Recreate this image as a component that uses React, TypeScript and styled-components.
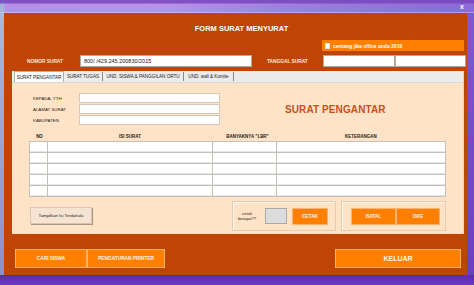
import React from "react";
import styled, { createGlobalStyle } from "styled-components";

const GlobalStyle = createGlobalStyle`
  html, body { margin: 0; padding: 0; width: 474px; height: 285px; overflow: hidden; }
  body { font-family: "Liberation Sans", Arial, sans-serif; background: #6a3cc0; }
  * { box-sizing: border-box; }
`;

const Screen = styled.div`
  width: 474px;
  height: 285px;
  display: flex;
  flex-direction: column;
  background: linear-gradient(90deg, #8f9fd6 0%, #7a54c6 3%, #6b3fc0 100%);
`;

const TitleBar = styled.div`
  height: 13px;
  display: flex;
  justify-content: flex-end;
  align-items: center;
  padding-right: 10px;
  background:
    linear-gradient(180deg, rgba(120, 70, 190, 0.85) 0px, rgba(120, 70, 190, 0.85) 3px, rgba(255, 255, 255, 0) 4px, rgba(255, 255, 255, 0) 12px, rgba(230, 215, 250, 0.9) 13px),
    linear-gradient(90deg, #a3b2dc 0px, #a3b2dc 4px, #b68ee6 5px, #b792e8 35%, #9f80dc 60%, #8a6ad4 100%);
`;

const CloseX = styled.span`
  color: #ffffff;
  font-size: 7px;
  font-weight: bold;
  line-height: 7px;
`;

const Middle = styled.div`
  display: flex;
  height: 262px;
`;

const LeftEdge = styled.div`
  width: 4px;
  background: linear-gradient(180deg, #a8b8de, #8b90cc);
`;

const RightEdge = styled.div`
  width: 7px;
  background: linear-gradient(180deg, #7b5ccc, #6a40c0);
`;

const BottomEdge = styled.div`
  height: 10px;
  background: linear-gradient(180deg, #5a2aa8, #6c3bc4);
`;

const Window = styled.div`
  width: 463px;
  height: 262px;
  background: #c04406;
  display: flex;
  flex-direction: column;
`;

const Title = styled.div`
  height: 27px;
  padding-top: 10px;
  padding-left: 12px;
  text-align: center;
  color: #ffffff;
  font-weight: bold;
  font-size: 7.5px;
  line-height: 12px;
`;

const CheckRow = styled.div`
  height: 11px;
  display: flex;
  justify-content: flex-end;
  padding-right: 3px;
`;

const CheckBar = styled.label`
  width: 142px;
  height: 11px;
  background: #ff7f00;
  display: flex;
  align-items: center;
  gap: 3px;
  padding-left: 3px;
  color: #ffffff;
  font-weight: bold;
  font-size: 5px;
`;

const CheckBox = styled.span`
  width: 5px;
  height: 6px;
  background: #ffffff;
  border: 1px solid #e0e0e0;
`;

const FieldRow = styled.div`
  margin-top: 4px;
  height: 12px;
  display: flex;
  align-items: center;
`;

const HeadLabel = styled.span<{ $w: number; $ml: number }>`
  width: ${(p) => p.$w}px;
  margin-left: ${(p) => p.$ml}px;
  color: #ffe9d6;
  font-weight: bold;
  font-size: 4.8px;
  white-space: nowrap;
`;

const WhiteInput = styled.div<{ $w: number }>`
  width: ${(p) => p.$w}px;
  height: 12px;
  background: #ffffff;
  border: 1px solid #b8a898;
  font-size: 5.5px;
  line-height: 10px;
  padding-left: 3px;
  color: #222;
`;

const Panel = styled.div`
  margin-top: 4px;
  margin-left: 8px;
  width: 452px;
  height: 163px;
  display: flex;
  flex-direction: column;
  border-right: 1px solid #e8d2bc;
`;

const TabStrip = styled.div`
  height: 12px;
  background: #ececec;
  display: flex;
  align-items: flex-end;
  padding-left: 2px;
  border-bottom: 1px solid #d8d8d8;
`;

const Tab = styled.div<{ $active?: boolean; $w: number }>`
  width: ${(p) => p.$w}px;
  height: ${(p) => (p.$active ? 11 : 9)}px;
  margin-bottom: ${(p) => (p.$active ? 0 : 1)}px;
  display: flex;
  align-items: center;
  justify-content: center;
  font-size: 4.6px;
  color: #222;
  white-space: nowrap;
  background: ${(p) => (p.$active ? "#fbfbfb" : "transparent")};
  border: ${(p) => (p.$active ? "1px solid #b0b0b0" : "none")};
  border-bottom: none;
  border-right: ${(p) => (p.$active ? "1px solid #b0b0b0" : "1px solid #8a8a8a")};
`;

const Content = styled.div`
  flex: 1;
  background: #fee3c7;
  display: flex;
  flex-direction: column;
  padding-top: 10px;
`;

const TopSection = styled.div`
  display: flex;
  align-items: center;
  height: 32px;
`;

const FieldGrid = styled.div`
  margin-left: 21px;
  display: grid;
  grid-template-columns: 46px 141px;
  grid-auto-rows: 10px;
  row-gap: 1px;
  align-items: center;
`;

const SmallLabel = styled.span`
  font-size: 4.4px;
  color: #2a1a10;
  white-space: nowrap;
`;

const FieldBox = styled.div`
  height: 10px;
  background: #ffffff;
  border: 1px solid #d6c6b6;
`;

const Heading = styled.div`
  margin-left: 65px;
  color: #c4521a;
  font-weight: bold;
  font-size: 10px;
  letter-spacing: 0.1px;
  white-space: nowrap;
`;

const TableHead = styled.div`
  margin-top: 7px;
  margin-left: 18px;
  height: 9px;
  display: grid;
  grid-template-columns: 17px 164px 63px 168px;
  column-gap: 1px;
  align-items: center;
`;

const HeadCell = styled.span<{ $shift?: number }>`
  text-align: center;
  font-size: 4.5px;
  font-weight: bold;
  color: #2a1a10;
  white-space: nowrap;
  transform: translateX(${(p) => p.$shift || 0}px);
`;

const Table = styled.div`
  margin-left: 17px;
  width: 417px;
  display: grid;
  grid-template-columns: 17px 164px 63px 168px;
  grid-auto-rows: 10px;
  gap: 1px;
  padding: 1px;
  background: #c6c0ba;
`;

const Cell = styled.div`
  background: #ffffff;
  border-bottom: 1px solid #e6e6e6;
`;

const BottomSection = styled.div`
  margin-top: 4px;
  display: flex;
  align-items: center;
  height: 30px;
`;

const GreyButton = styled.div`
  margin-left: 18px;
  width: 62px;
  height: 17px;
  margin-top: -2px;
  background: #f6e4d2;
  border: 1px solid #d8c4b0;
  box-shadow: 1px 1px 0 #a89888;
  font-size: 4.3px;
  color: #222;
  display: flex;
  align-items: center;
  justify-content: center;
  white-space: nowrap;
`;

const Group = styled.div<{ $ml: number; $w: number }>`
  margin-left: ${(p) => p.$ml}px;
  width: ${(p) => p.$w}px;
  height: 30px;
  border: 1px solid #e6cdb2;
  box-shadow: inset 1px 1px 0 #fff6ec;
  display: flex;
  align-items: center;
  padding-left: 8px;
`;

const CetakText = styled.div`
  width: 24px;
  font-size: 4.3px;
  line-height: 5px;
  color: #2a1a10;
  text-align: center;
  margin-left: -6px;
`;

const GreyBox = styled.div`
  margin-left: 6px;
  width: 22px;
  height: 16px;
  background: #dcdcdc;
  border: 1px solid #a8a8a8;
`;

const OrangeButton = styled.div<{ $w: number; $h?: number; $fs?: number; $ml?: number }>`
  width: ${(p) => p.$w}px;
  height: ${(p) => p.$h || 16}px;
  margin-left: ${(p) => p.$ml || 0}px;
  background: #ff7f00;
  border: 1px solid #ffb46e;
  color: #fff4e4;
  font-weight: bold;
  font-size: ${(p) => p.$fs || 4.8}px;
  display: flex;
  align-items: center;
  justify-content: center;
  white-space: nowrap;
`;

const BottomRow = styled.div`
  margin-top: 15px;
  height: 19px;
  display: flex;
  align-items: center;
`;

const rows = [0, 1, 2, 3, 4];

export default function App() {
  return (
    <>
      <GlobalStyle />
      <Screen>
        <TitleBar>
          <CloseX>x</CloseX>
        </TitleBar>
        <Middle>
          <LeftEdge />
          <Window>
            <Title>FORM SURAT MENYURAT</Title>
            <CheckRow>
              <CheckBar>
                <CheckBox />
                centang jika office anda 2010
              </CheckBar>
            </CheckRow>
            <FieldRow>
              <HeadLabel $w={53} $ml={23}>NOMOR SURAT</HeadLabel>
              <WhiteInput $w={172}>800/ /429.245.200830/2015</WhiteInput>
              <HeadLabel $w={56} $ml={15}>TANGGAL SURAT</HeadLabel>
              <WhiteInput $w={72} />
              <WhiteInput $w={71} />
            </FieldRow>
            <Panel>
              <TabStrip>
                <Tab $active $w={50}>SURAT PENGANTAR</Tab>
                <Tab $w={39}>SURAT TUGAS</Tab>
                <Tab $w={81}>UND. SISWA &amp; PANGGILAN ORTU</Tab>
                <Tab $w={50}>UND. wali &amp; Komite</Tab>
              </TabStrip>
              <Content>
                <TopSection>
                  <FieldGrid>
                    <SmallLabel>KEPADA, YTH</SmallLabel>
                    <FieldBox />
                    <SmallLabel>ALAMAT SURAT</SmallLabel>
                    <FieldBox />
                    <SmallLabel>KABUPATEN</SmallLabel>
                    <FieldBox />
                  </FieldGrid>
                  <Heading>SURAT PENGANTAR</Heading>
                </TopSection>
                <TableHead>
                  <HeadCell $shift={1}>NO</HeadCell>
                  <HeadCell>ISI SURAT</HeadCell>
                  <HeadCell $shift={3}>BANYAKNYA "LBR"</HeadCell>
                  <HeadCell>KETERANGAN</HeadCell>
                </TableHead>
                <Table>
                  {rows.map((r) => (
                    <React.Fragment key={r}>
                      <Cell />
                      <Cell />
                      <Cell />
                      <Cell />
                    </React.Fragment>
                  ))}
                </Table>
                <BottomSection>
                  <GreyButton>Tampilkan Isi Terdahulu</GreyButton>
                  <Group $ml={140} $w={104}>
                    <CetakText>
                      cetak
                      <br />
                      berapa??
                    </CetakText>
                    <GreyBox />
                    <OrangeButton $w={36} $h={17} $ml={5}>CETAK</OrangeButton>
                  </Group>
                  <Group $ml={5} $w={105}>
                    <OrangeButton $w={45} $h={17} $ml={1}>BATAL</OrangeButton>
                    <OrangeButton $w={44} $h={17}>OKE</OrangeButton>
                  </Group>
                </BottomSection>
              </Content>
            </Panel>
            <BottomRow>
              <OrangeButton $w={72} $h={19} $ml={11}>CARI SISWA</OrangeButton>
              <OrangeButton $w={78} $h={19}>PENGATURAN PRINTER</OrangeButton>
              <OrangeButton $w={126} $h={19} $ml={170} $fs={7}>KELUAR</OrangeButton>
            </BottomRow>
          </Window>
          <RightEdge />
        </Middle>
        <BottomEdge />
      </Screen>
    </>
  );
}
